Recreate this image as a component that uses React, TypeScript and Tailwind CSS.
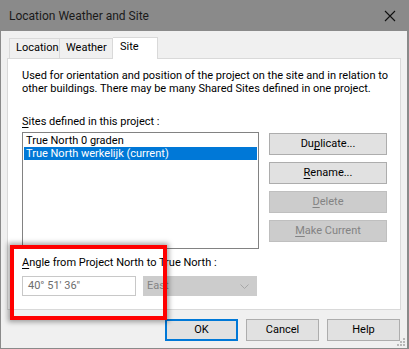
import React from "react";

const font = { fontFamily: 'Roboto, "Segoe UI", sans-serif' };

function Btn({ children, disabled, def }: { children: React.ReactNode; disabled?: boolean; def?: boolean }) {
  return (
    <div
      className={
        "flex items-center justify-center h-[22px] text-[11px] " +
        (disabled
          ? "bg-[#cccccc] border border-[#bfbfbf] text-[#838383]"
          : def
          ? "bg-[#e1e1e1] border-2 border-[#0078d7] text-[#000000]"
          : "bg-[#e1e1e1] border border-[#adadad] text-[#000000]")
      }
    >
      {children}
    </div>
  );
}

export default function App() {
  return (
    <div className="relative w-[409px] h-[349px] flex flex-col bg-[#f0f0f0] border-l border-r-2 border-b border-[#8a8a8a] overflow-hidden" style={font}>
      {/* title bar */}
      <div className="h-[31px] shrink-0 bg-[#8a8a8a] flex items-center justify-between pl-[8px] pr-[10px]">
        <span className="text-[12px] text-[#1a1a1a]">Location Weather and Site</span>
        <svg width="12" height="12" viewBox="0 0 12 12" className="mr-[1px]">
          <path d="M1 1 L11 11 M11 1 L1 11" stroke="#111" strokeWidth="1.1" />
        </svg>
      </div>
      {/* body */}
      <div className="flex-1 flex flex-col pl-[6px] pr-[6px]">
        {/* tabs */}
        <div className="flex items-end h-[27px] pl-[2px] pt-[6px]">
          <div className="h-[20px] w-[51px] pl-[6px] border border-b-0 border-[#d9d9d9] flex items-center text-[11px] text-[#000] whitespace-nowrap">Location</div>
          <div className="h-[20px] w-[53px] pl-[6px] border border-l-0 border-b-0 border-[#d9d9d9] flex items-center text-[11px] text-[#000] whitespace-nowrap">Weather</div>
          <div className="relative h-[22px] w-[45px] -mb-px bg-white border border-l-0 border-b-0 border-[#d9d9d9] flex items-start pt-[1px] pl-[7px] text-[11px] text-[#000] z-10">Site</div>
        </div>
        {/* panel */}
        <div className="h-[252px] bg-white border border-[#d9d9d9] pl-[14px] pt-[10px] flex flex-col">
          <p className="text-[11px] leading-[13px] text-[#000] whitespace-nowrap">
            Used for orientation and position of the project on the site and in relation to
            <br />
            other buildings. There may be many Shared Sites defined in one project.
          </p>
          <div className="mt-[20px] text-[11px] leading-[14px] text-[#000]">
            <span className="underline underline-offset-2">S</span>ites defined in this project :
          </div>
          <div className="mt-[3px] flex">
            <div className="w-[237px] h-[117px] border border-[#828282] p-[1px] text-[11px] leading-[13px]">
              <div className="h-[13px] pl-[2px] text-[#000] whitespace-nowrap">True North 0 graden</div>
              <div className="h-[13px] pl-[2px] bg-[#0078d7] text-white whitespace-nowrap">True North werkelijk (current)</div>
            </div>
            <div className="ml-[10px] w-[118px] flex flex-col gap-[7px] pt-[1px]">
              <Btn>Du<span className="underline underline-offset-2">p</span>licate...</Btn>
              <Btn><span className="underline underline-offset-2">R</span>ename...</Btn>
              <Btn disabled><span className="underline underline-offset-2">D</span>elete</Btn>
              <Btn disabled><span className="underline underline-offset-2">M</span>ake Current</Btn>
            </div>
          </div>
          <div className="mt-[7px] text-[11px] leading-[14px] text-[#000]">
            <span className="underline underline-offset-2">A</span>ngle from Project North to True North :
          </div>
          <div className="mt-[6px] flex gap-[7px]">
            <div className="w-[114px] h-[20px] border border-[#c8c8c8] flex items-center pl-[5px] text-[11px] text-[#6d6d6d]">40° 51' 36"</div>
            <div className="w-[114px] h-[20px] bg-[#cccccc] border border-[#cccccc] flex items-center justify-between pl-[3px] pr-[7px] text-[11px] text-[#838383]">
              <span>East</span>
              <svg width="9" height="5" viewBox="0 0 9 5">
                <path d="M0.5 0.5 L4.5 4.5 L8.5 0.5" stroke="#a6a6a6" fill="none" strokeWidth="1" />
              </svg>
            </div>
          </div>
        </div>
        {/* bottom buttons */}
        <div className="mt-[9px] flex justify-end gap-[8px] pr-[1px]">
          <div className="w-[73px]"><Btn def>OK</Btn></div>
          <div className="w-[73px]"><Btn>Cancel</Btn></div>
          <div className="w-[73px]"><Btn>Help</Btn></div>
        </div>
      </div>
      {/* resize grip */}
      <svg className="absolute right-[1px] bottom-[1px]" width="10" height="10" viewBox="0 0 10 10">
        <rect x="7" y="1" width="2" height="2" fill="#b8b8b8" />
        <rect x="4" y="4" width="2" height="2" fill="#b8b8b8" />
        <rect x="7" y="4" width="2" height="2" fill="#b8b8b8" />
        <rect x="1" y="7" width="2" height="2" fill="#b8b8b8" />
        <rect x="4" y="7" width="2" height="2" fill="#b8b8b8" />
        <rect x="7" y="7" width="2" height="2" fill="#b8b8b8" />
      </svg>
      {/* red highlight */}
      <div className="absolute left-[9px] top-[245px] w-[157px] h-[75px] border-[4px] border-[#ff0000] shadow-[0_0_5px_2px_rgba(0,0,0,0.35)] pointer-events-none" />
    </div>
  );
}
